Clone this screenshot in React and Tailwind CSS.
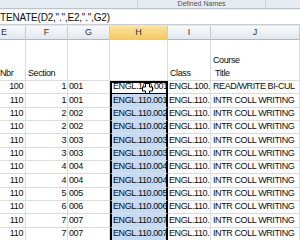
import React from "react";

const rows = [
  ["100", "1", "001", "ENGL.100.001", "ENGL.100.", "READ/WRITE BI-CUL"],
  ["110", "1", "001", "ENGL.110.001", "ENGL.110.", "INTR COLL WRITING"],
  ["110", "2", "002", "ENGL.110.002", "ENGL.110.", "INTR COLL WRITING"],
  ["110", "2", "002", "ENGL.110.002", "ENGL.110.", "INTR COLL WRITING"],
  ["110", "3", "003", "ENGL.110.003", "ENGL.110.", "INTR COLL WRITING"],
  ["110", "3", "003", "ENGL.110.003", "ENGL.110.", "INTR COLL WRITING"],
  ["110", "4", "004", "ENGL.110.004", "ENGL.110.", "INTR COLL WRITING"],
  ["110", "4", "004", "ENGL.110.004", "ENGL.110.", "INTR COLL WRITING"],
  ["110", "5", "005", "ENGL.110.005", "ENGL.110.", "INTR COLL WRITING"],
  ["110", "6", "006", "ENGL.110.006", "ENGL.110.", "INTR COLL WRITING"],
  ["110", "7", "007", "ENGL.110.007", "ENGL.110.", "INTR COLL WRITING"],
  ["110", "7", "007", "ENGL.110.007", "ENGL.110.", "INTR COLL WRITING"],
];

const cols = "grid grid-cols-[26px_42px_42px_58px_43px_1fr]";
const cell = "border-r border-b border-[#dadcdd] overflow-hidden whitespace-nowrap flex items-end pb-[1px]";
const head = "border-r border-b border-[#dadcdd] overflow-hidden whitespace-nowrap flex items-end leading-[13px]";

function CursorCross() {
  // fat white plus that Excel shows over cells
  return (
    <svg width="11" height="12" viewBox="0 0 11 12" className="absolute left-[30px] top-[0px]">
      <path d="M3.5 0.5h4v3.5h3v4h-3v3.5h-4v-3.5h-3v-4h3z" fill="#fff" stroke="#000" strokeWidth="1" />
    </svg>
  );
}

export default function App() {
  return (
    <div className="w-[300px] h-[240px] overflow-hidden bg-white text-[#0c0c0c] font-['Liberation_Sans',Arial,sans-serif] text-[9px] tracking-[-0.4px]">
      {/* ribbon strip */}
      <div className="flex h-[9px] bg-[#e6ebf1] border-b border-[#b9c3cf] text-[7px] leading-[8px] text-[#4a5563] tracking-normal">
        <div className="w-[138px] border-r border-[#c5ced9]" />
        <div className="w-[128px] border-r border-[#c5ced9] flex justify-center">Defined Names</div>
        <div className="flex-1" />
      </div>
      <div className="h-[1px] bg-[#eef1f5]" />
      {/* formula bar */}
      <div className="h-[15px] flex items-center text-[10px] tracking-[-0.2px] border-b border-[#c8cdd4]">TENATE(D2,".",E2,".",G2)</div>
      <div className="h-[1px] bg-[#e3e7ec]" />
      {/* column headers */}
      <div className={`${cols} h-[14px] text-[9px] tracking-normal text-[#2b3440] bg-gradient-to-b from-[#f7f9fb] to-[#e3e8ee] border-b border-[#aeb8c4]`}>
        {["E", "F", "G", "H", "I", "J"].map((c, i) => (
          <div
            key={c}
            className={`flex items-center border-r border-[#c4ccd6] ${i === 0 ? "pl-[1px]" : "justify-center"} ${
              c === "H" ? "bg-gradient-to-b from-[#fbe39f] to-[#f4c75c]" : ""
            }`}
          >
            {c}
          </div>
        ))}
      </div>
      {/* header row of the sheet */}
      <div className={`${cols} h-[41px]`}>
        <div className={head}>Nbr</div>
        <div className={`${head} pl-[2px]`}>Section</div>
        <div className={head} />
        <div className={head} />
        <div className={`${head} pl-[2px]`}>Class</div>
        <div className={`${head} flex-col !items-start justify-end pl-[2px]`}>
          <span>Course</span>
          <span className="pl-[2px]">Title</span>
        </div>
      </div>
      {rows.map((r, i) => (
        <div key={i} className={`${cols} h-[13.33px] leading-[11px]`}>
          <div className={`${cell} justify-end pr-[2px]`}>{r[0]}</div>
          <div className={`${cell} justify-end pr-[1px]`}>{r[1]}</div>
          <div className={`${cell} pl-[1px]`}>{r[2]}</div>
          <div
            className={`${cell} relative pl-[1px] border-l-2 border-r-2 !border-r-black !border-l-black ${
              i === 0 ? "bg-white border-t-2 !border-t-black !border-b-black" : "bg-[#c3dbf4]"
            }`}
          >
            {r[3]}
            {i === 0 && <CursorCross />}
          </div>
          <div className={`${cell} pl-[1px]`}>{r[4]}</div>
          <div className={`${cell} pl-[2px]`}>{r[5]}</div>
        </div>
      ))}
    </div>
  );
}
